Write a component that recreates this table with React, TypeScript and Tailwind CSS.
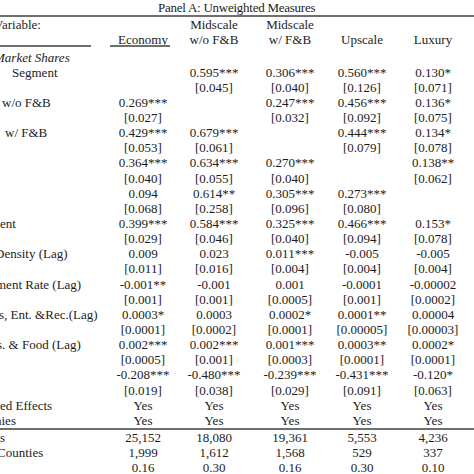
import React from "react";

type Row = { label?: string; italic?: boolean; indent?: string; cells: string[] };

const rows: Row[] = [
  { label: "Market Shares", italic: true, indent: "ml-[-6px]", cells: ["", "", "", "", ""] },
  { label: "Segment", indent: "ml-[12px]", cells: ["", "0.595***", "0.306***", "0.560***", "0.130*"] },
  { cells: ["", "[0.045]", "[0.040]", "[0.126]", "[0.071]"] },
  { label: "w/o F&B", indent: "ml-[2px]", cells: ["0.269***", "", "0.247***", "0.456***", "0.136*"] },
  { cells: ["[0.027]", "", "[0.032]", "[0.092]", "[0.075]"] },
  { label: "w/ F&B", indent: "ml-[5px]", cells: ["0.429***", "0.679***", "", "0.444***", "0.134*"] },
  { cells: ["[0.053]", "[0.061]", "", "[0.079]", "[0.078]"] },
  { cells: ["0.364***", "0.634***", "0.270***", "", "0.138**"] },
  { cells: ["[0.040]", "[0.055]", "[0.040]", "", "[0.062]"] },
  { cells: ["0.094", "0.614**", "0.305***", "0.273***", ""] },
  { cells: ["[0.068]", "[0.258]", "[0.096]", "[0.080]", ""] },
  { label: "ent", indent: "ml-[0px]", cells: ["0.399***", "0.584***", "0.325***", "0.466***", "0.153*"] },
  { cells: ["[0.029]", "[0.046]", "[0.040]", "[0.094]", "[0.078]"] },
  { label: "Density (Lag)", indent: "ml-[-5px]", cells: ["0.009", "0.023", "0.011***", "-0.005", "-0.005"] },
  { cells: ["[0.011]", "[0.016]", "[0.004]", "[0.004]", "[0.004]"] },
  { label: "ment Rate (Lag)", indent: "ml-[-4px]", cells: ["-0.001**", "-0.001", "0.001", "-0.0001", "-0.00002"] },
  { cells: ["[0.001]", "[0.001]", "[0.0005]", "[0.001]", "[0.0002]"] },
  { label: "s, Ent. &Rec.(Lag)", indent: "ml-[-1px]", cells: ["0.0003*", "0.0003", "0.0002*", "0.0001**", "0.00004"] },
  { cells: ["[0.0001]", "[0.0002]", "[0.0001]", "[0.00005]", "[0.00003]"] },
  { label: "s. & Food (Lag)", indent: "ml-[-3px]", cells: ["0.002***", "0.002***", "0.001***", "0.0003**", "0.0002*"] },
  { cells: ["[0.0005]", "[0.001]", "[0.0003]", "[0.0001]", "[0.0001]"] },
  { cells: ["-0.208***", "-0.480***", "-0.239***", "-0.431***", "-0.120*"] },
  { cells: ["[0.019]", "[0.038]", "[0.029]", "[0.091]", "[0.063]"] },
  { label: "ed Effects", indent: "ml-[0px]", cells: ["Yes", "Yes", "Yes", "Yes", "Yes"] },
  { label: "nies", indent: "ml-[-5px]", cells: ["Yes", "Yes", "Yes", "Yes", "Yes"] },
];

const footer: Row[] = [
  { label: "s", indent: "ml-[0px]", cells: ["25,152", "18,080", "19,361", "5,553", "4,236"] },
  { label: "Counties", indent: "ml-[-3px]", cells: ["1,999", "1,612", "1,568", "529", "337"] },
  { cells: ["0.16", "0.30", "0.16", "0.30", "0.10"] },
];

const grid = "grid grid-cols-[107px_72px_70px_82px_62px_80px] leading-[15.15px] h-[15.15px]";

const TableRow = ({ row }: { row: Row }) => (
  <div className={grid}>
    <div className="whitespace-nowrap">
      <span className={`${row.indent ?? ""} inline-block ${row.italic ? "italic" : ""}`}>{row.label}</span>
    </div>
    {row.cells.map((c, i) => (
      <div key={i} className="text-center whitespace-nowrap">
        {c}
      </div>
    ))}
  </div>
);

export default function App() {
  return (
    <div className="w-[474px] h-[474px] overflow-hidden bg-white text-[#1c1c1c] font-['Liberation_Serif',serif] text-[13px]">
      {/* title */}
      <div className="h-[15px] leading-[15px] pl-[158px] whitespace-nowrap tracking-[-0.25px]">Panel A: Unweighted Measures</div>
      <div className="h-[2px] bg-[#6f6f6f]" />

      {/* column heads */}
      <div className="grid grid-cols-[107px_72px_70px_82px_62px_80px] h-[15px] leading-[15px]">
        <div className="whitespace-nowrap">
          <span className="inline-block ml-[-6px]">Variable:</span>
        </div>
        <div />
        <div className="text-center">Midscale</div>
        <div className="text-center">Midscale</div>
        <div />
        <div />
      </div>
      <div className="grid grid-cols-[107px_72px_70px_82px_62px_80px] h-[13px] leading-[15px]">
        <div />
        <div className="text-center">Economy</div>
        <div className="text-center whitespace-nowrap">w/o F&amp;B</div>
        <div className="text-center whitespace-nowrap">w/ F&amp;B</div>
        <div className="text-center">Upscale</div>
        <div className="text-center">Luxury</div>
      </div>
      <div className="flex h-[2px]">
        <div className="w-[91px] bg-[#6f6f6f]" />
        <div className="w-[19px]" />
        <div className="w-[60px] bg-[#6f6f6f]" />
      </div>

      <div className="mt-[2.5px]">
        {rows.map((r, i) => (
          <TableRow key={i} row={r} />
        ))}
      </div>
      <div className="h-[1.5px] bg-[#6f6f6f]" />
      <div>
        {footer.map((r, i) => (
          <TableRow key={i} row={r} />
        ))}
      </div>
    </div>
  );
}
